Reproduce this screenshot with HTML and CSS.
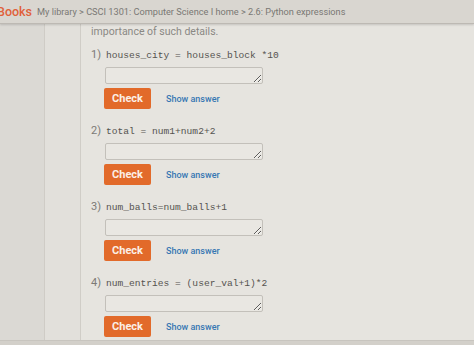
FILE: index.html
```html
<!DOCTYPE html>
<html lang="en">
<head>
    <meta charset="UTF-8">
    <meta name="viewport" content="width=device-width, initial-scale=1.0">
    <title>2.6: Python expressions</title>
    <link rel="stylesheet" href="styles.css">
</head>
<body>
    <div class="topbar">
        <span class="brand">Books</span>
        <span class="crumbs">My library &gt; CSCI 1301: Computer Science I home &gt; 2.6: Python expressions</span>
    </div>
    <div class="page">
        <div class="side"></div>
        <div class="rail"></div>
        <div class="main">
            <p class="intro">importance of such details.</p>
            <div class="question">
                <div class="prompt"><span class="num">1)</span><code>houses_city = houses_block *10</code></div>
                <textarea class="answer"></textarea>
                <div class="actions">
                    <button class="check">Check</button>
                    <span class="show">Show answer</span>
                </div>
            </div>
            <div class="question">
                <div class="prompt"><span class="num">2)</span><code>total = num1+num2+2</code></div>
                <textarea class="answer"></textarea>
                <div class="actions">
                    <button class="check">Check</button>
                    <span class="show">Show answer</span>
                </div>
            </div>
            <div class="question">
                <div class="prompt"><span class="num">3)</span><code>num_balls=num_balls+1</code></div>
                <textarea class="answer"></textarea>
                <div class="actions">
                    <button class="check">Check</button>
                    <span class="show">Show answer</span>
                </div>
            </div>
            <div class="question">
                <div class="prompt"><span class="num">4)</span><code>num_entries = (user_val+1)*2</code></div>
                <textarea class="answer"></textarea>
                <div class="actions">
                    <button class="check">Check</button>
                    <span class="show">Show answer</span>
                </div>
            </div>
        </div>
    </div>
</body>
</html>
```

FILE: styles.css
```css
body {
    margin: 0;
    font-family: Roboto, "Liberation Sans", sans-serif;
    background-color: #d3d0ca;
    height: 345px;
    overflow: hidden;
}
.topbar {
    height: 23px;
    display: flex;
    align-items: center;
    gap: 5px;
    background-color: #d9d6d0;
    border-bottom: 1px solid #bdb9b3;
    box-shadow: 0 1px 2px rgba(0,0,0,0.15);
    position: relative;
    z-index: 1;
}
.brand {
    margin-left: -3px;
    color: #e0603a;
    font-size: 12.5px;
    font-weight: 500;
}
.crumbs {
    color: #7a7874;
    font-size: 9.2px;
}
.page {
    display: flex;
    height: 316px;
    border-bottom: 1px solid #c8c5bf;
}
.side {
    width: 44px;
    background-color: #dbd9d4;
    border-right: 1px solid #cfccc6;
}
.rail {
    width: 35px;
    background-color: #e2e0db;
    border-right: 1px solid #d0cdc7;
}
.main {
    flex: 1;
    background-color: #e6e4df;
    padding-left: 10px;
}
.intro {
    margin: 0;
    margin-top: 1px;
    color: #8a8884;
    font-size: 10.5px;
}
.question {
    height: 76px;
}
.intro + .question {
    margin-top: 10px;
}
.prompt {
    display: flex;
    align-items: baseline;
    gap: 5px;
}
.num {
    color: #7c7a76;
    font-size: 11px;
}
code {
    font-family: "Liberation Mono", monospace;
    font-size: 9.6px;
    color: #55534f;
}
.answer {
    display: block;
    box-sizing: border-box;
    width: 158px;
    height: 17px;
    margin: 6px 0 0 14px;
    padding: 0;
    background-color: #e9e7e2;
    border: 1px solid #c3c0ba;
    border-radius: 2px;
}
.actions {
    display: flex;
    align-items: center;
    gap: 15px;
    margin: 4px 0 0 13px;
}
.check {
    width: 47px;
    height: 21px;
    padding: 0;
    border: none;
    border-radius: 2px;
    background-color: #e26a2a;
    color: #fbefe6;
    font-family: Roboto, "Liberation Sans", sans-serif;
    font-size: 11px;
    font-weight: bold;
}
.show {
    color: #3777b3;
    font-size: 9px;
    font-weight: 500;
}
```
